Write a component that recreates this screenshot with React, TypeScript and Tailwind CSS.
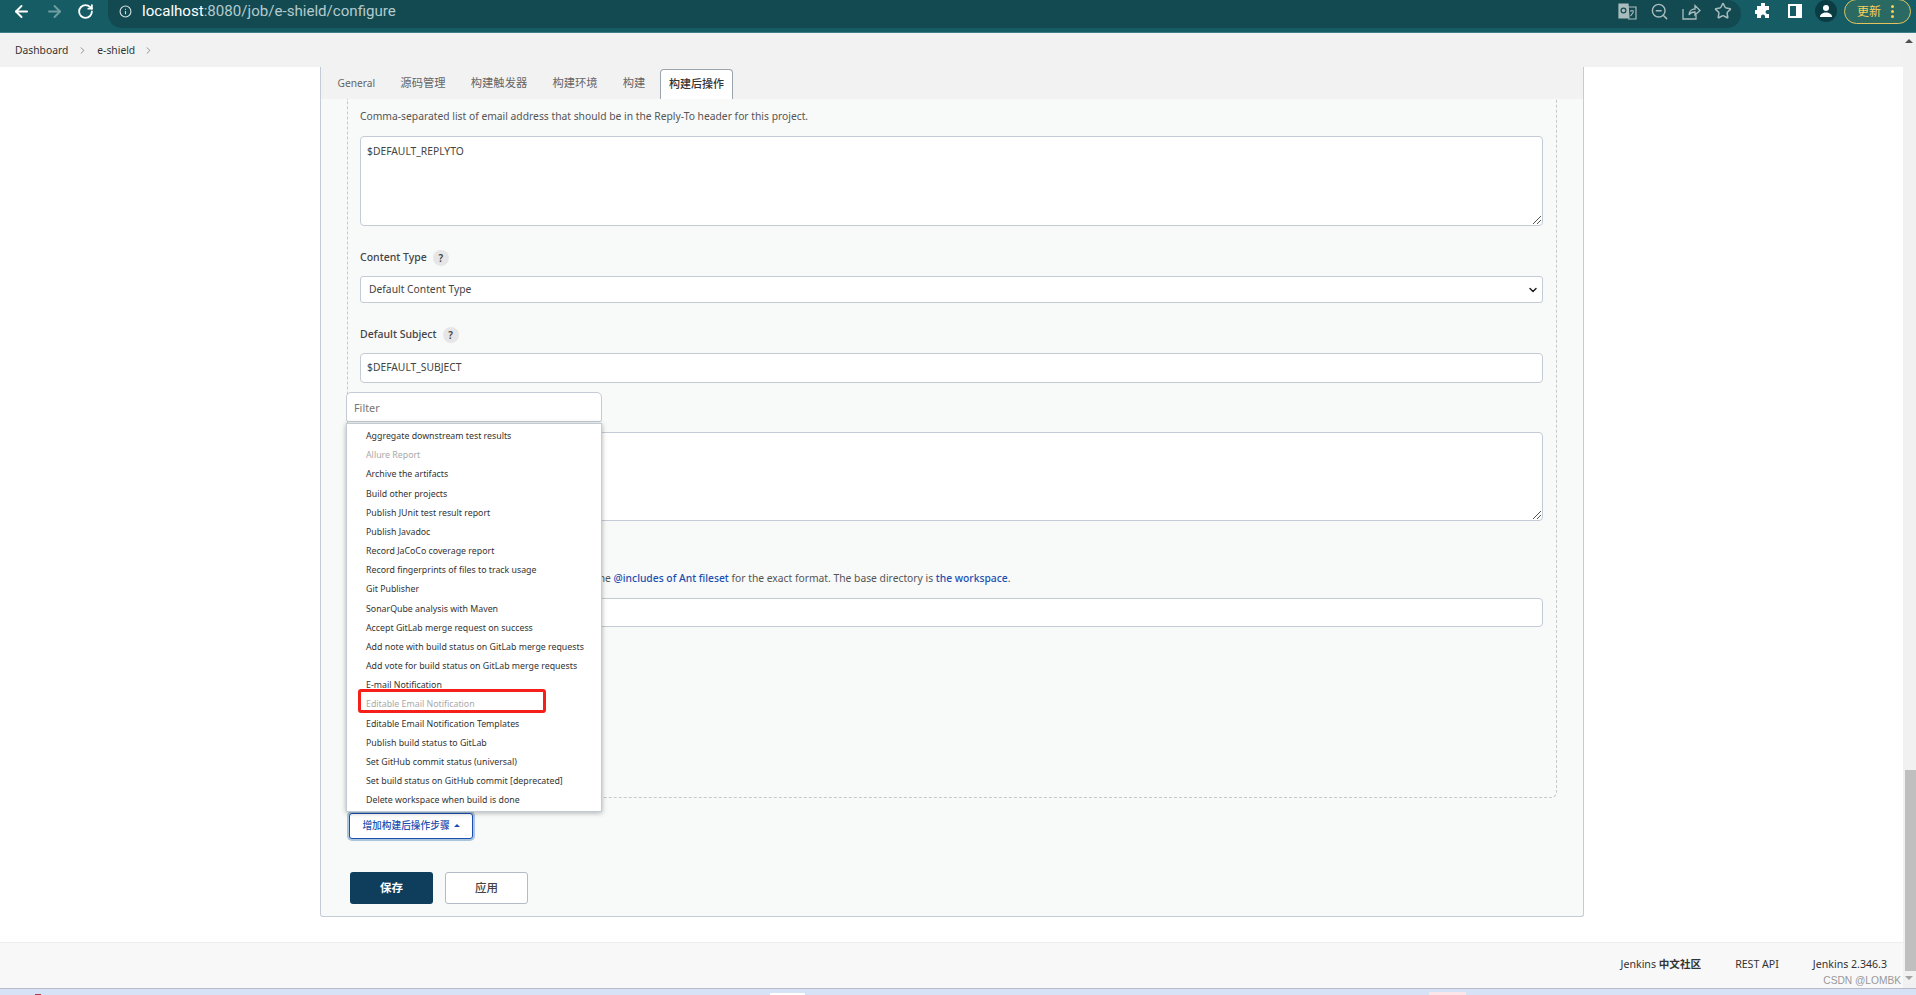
import { ArrowLeft, ArrowRight, RotateCw, Info, ZoomOut, Star, ChevronRight, ChevronDown } from 'lucide-react'

const font = "font-['Noto_Sans','Noto_Sans_CJK_SC',sans-serif]"

const menuItems = [
  { label: 'Aggregate downstream test results' },
  { label: 'Allure Report', disabled: true },
  { label: 'Archive the artifacts' },
  { label: 'Build other projects' },
  { label: 'Publish JUnit test result report' },
  { label: 'Publish Javadoc' },
  { label: 'Record JaCoCo coverage report' },
  { label: 'Record fingerprints of files to track usage' },
  { label: 'Git Publisher' },
  { label: 'SonarQube analysis with Maven' },
  { label: 'Accept GitLab merge request on success' },
  { label: 'Add note with build status on GitLab merge requests' },
  { label: 'Add vote for build status on GitLab merge requests' },
  { label: 'E-mail Notification' },
  { label: 'Editable Email Notification', disabled: true, marked: true },
  { label: 'Editable Email Notification Templates' },
  { label: 'Publish build status to GitLab' },
  { label: 'Set GitHub commit status (universal)' },
  { label: 'Set build status on GitHub commit [deprecated]' },
  { label: 'Delete workspace when build is done' },
]

const tabs = ['General', '源码管理', '构建触发器', '构建环境', '构建']

function HelpIcon() {
  return (
    <span className="ml-[6px] flex h-4 w-4 items-center justify-center rounded-full bg-[#e6e6e6] text-[10px] font-semibold text-[#444]">?</span>
  )
}

function ResizeHandle() {
  return (
    <svg width="9" height="9" viewBox="0 0 9 9" className="absolute bottom-[1px] right-[1px]" stroke="#555" strokeWidth="1">
      <path d="M1 9l8-8M5 9l4-4" />
    </svg>
  )
}

function BrowserBar() {
  return (
    <div className="flex h-[33px] shrink-0 items-start border-b border-[#3d7f86] bg-[#155c64] text-white">
      <div className="flex h-[28px] w-[108px] shrink-0 items-center pb-[6px] pl-[12px]">
        <ArrowLeft size={19} strokeWidth={2.4} className="shrink-0" />
        <ArrowRight size={19} strokeWidth={2.4} className="ml-[14px] shrink-0 text-[#6f9da2]" />
        <RotateCw size={17} strokeWidth={2.6} className="ml-[13px] shrink-0" />
      </div>
      <div className="flex h-[28px] w-[1633px] shrink-0 items-center rounded-r-[14px] rounded-bl-[14px] bg-[#134a52] pb-[6px] pl-[11px] pr-[9px] font-['Roboto',sans-serif] text-[15.100px]">
        <Info size={13} className="mr-[10px] text-[#d6e4e5]" />
        <span>localhost</span>
        <span className="text-[#b4cacd]">:8080/job/e-shield/configure</span>
        <div className="ml-auto flex items-center gap-[13px] text-[#a9bcbe]">
          <svg width="19" height="17" viewBox="0 0 19 17" fill="none" stroke="currentColor" strokeWidth="1.2">
            <path d="M1 1h9l1 14H1z" fill="#a9bcbe" />
            <path d="M8 4h10v12H10" />
            <circle cx="5.500" cy="7.500" r="2.400" stroke="#134a52" />
            <path d="M12 8h4M14 7v1M12.500 13l3-4" />
          </svg>
          <ZoomOut size={19} strokeWidth={1.8} />
          <svg width="19" height="17" viewBox="0 0 19 17" fill="none" stroke="currentColor" strokeWidth="1.3">
            <path d="M1 6v10h13v-4" />
            <path d="M7 12c0-4 3-6 6-6V2.500l5 5-5 4.500V9c-3 0-5 1-6 3z" />
          </svg>
          <Star size={18} strokeWidth={2} />
        </div>
      </div>
      <div className="flex h-[22px] items-center">
        <svg width="16" height="16" viewBox="0 0 16 16" fill="white" className="ml-[14px]">
          <path d="M6 1a2 2 0 0 1 4 0v2h4v4h-1.500a2 2 0 0 0 0 4H14v4h-4v-1.500a2 2 0 0 0-4 0V15H2v-4H1a2 2 0 0 1 0-4h1V3h4z" />
        </svg>
        <svg width="14" height="14" viewBox="0 0 14 14" className="ml-[17px]">
          <rect width="14" height="14" fill="white" />
          <rect x="2" y="2" width="6" height="10" fill="#155c64" />
        </svg>
        <div className="ml-[13px] flex h-[22px] w-[22px] items-center justify-center rounded-full bg-[#0c3c43]">
          <svg width="14" height="14" viewBox="0 0 14 14" fill="white">
            <circle cx="7" cy="4" r="3" />
            <path d="M1 13c0-3 3-4.500 6-4.500s6 1.500 6 4.500z" />
          </svg>
        </div>
        <div className="ml-[7px] flex h-[25px] w-[67px] shrink-0 items-center rounded-full border border-[#e3c35e] bg-[#2b6a62] pl-[12px] font-['Noto_Sans_CJK_SC',sans-serif] text-[12px] text-[#f6cf5f]">
          更新
          <span className="ml-[10px] flex flex-col gap-[2px]">
            <span className="h-[3px] w-[3px] rounded-full bg-[#f6cf5f]" />
            <span className="h-[3px] w-[3px] rounded-full bg-[#f6cf5f]" />
            <span className="h-[3px] w-[3px] rounded-full bg-[#f6cf5f]" />
          </span>
        </div>
      </div>
    </div>
  )
}

function AddStepMenu() {
  return (
    <div className="absolute left-[26px] top-[325px] z-10 w-[256px]">
      <div className="flex h-[30px] items-center rounded-t-[5px] rounded-b-[2px] border border-[#c3ccd4] bg-white pl-[7px] pt-[2px] text-[10.800px] text-[#757575]">Filter</div>
      <div className="mt-[1px] h-[389px] border border-[#c3ccd4] bg-white pt-[3px] shadow-[0_1px_5px_rgba(0,0,0,0.3)]">
        {menuItems.map((item) => (
          <div key={item.label} className={`relative flex h-[19.180px] items-center whitespace-nowrap pl-[19px] text-[8.800px] ${item.disabled ? 'text-[#a9a9a9]' : 'text-[#333]'}`}>
            {item.label}
            {item.marked && <span className="absolute left-[11px] top-[-6px] h-[24px] w-[188px] rounded-[3px] border-[3px] border-[#f5201a]" />}
          </div>
        ))}
      </div>
    </div>
  )
}

function ConfigForm() {
  return (
    <div className="relative ml-[26px] mr-[26px] h-[699px] rounded-b-[6px] border-x border-b border-dashed border-[#c6c9cc] pl-[12px] pr-[13px]">
      <p className="pt-[9px] text-[10.300px] leading-[16px] text-[#555]">Comma-separated list of email address that should be in the Reply-To header for this project.</p>
      <div className="relative mt-[12px] h-[90px] rounded-[4px] border border-[#c3ccd4] bg-white px-[6px] pt-[6px] text-[10.300px] leading-[16px] text-[#444]">
        $DEFAULT_REPLYTO
        <ResizeHandle />
      </div>
      <div className="mt-[24px] flex h-4 items-center text-[10.500px] font-medium text-[#444]">Content Type <HelpIcon /></div>
      <div className="mt-[10px] flex h-[27px] items-center justify-between rounded-[3px] border border-[#c3ccd4] bg-white pl-[8px] pr-[3px] text-[10.300px] text-[#444]">
        Default Content Type
        <ChevronDown size={12} strokeWidth={3} className="text-[#222]" />
      </div>
      <div className="mt-[24px] flex h-4 items-center text-[10.500px] font-medium text-[#444]">Default Subject <HelpIcon /></div>
      <div className="mt-[10px] flex h-[30px] items-center rounded-[4px] border border-[#c3ccd4] bg-white pl-[6px] text-[10.300px] text-[#444]">$DEFAULT_SUBJECT</div>
      <div className="relative mt-[49px] h-[89px] rounded-[4px] border border-[#c3ccd4] bg-white">
        <ResizeHandle />
      </div>
      <p className="mt-[49px] whitespace-nowrap pl-[235px] text-[10.300px] leading-[16px] text-[#555]">
        the <span className="font-medium text-[#1d4fb0]">@includes of Ant fileset</span> for the exact format. The base directory is <span className="font-medium text-[#1d4fb0]">the workspace</span>.
      </p>
      <div className="mt-[12px] h-[29px] rounded-[4px] border border-[#c3ccd4] bg-white" />
    </div>
  )
}

function Footer() {
  return (
    <div className="relative flex h-[46px] shrink-0 items-center justify-end border-t border-[#eeeeee] bg-[#f8f8f8] pb-[1px] pr-[16px] text-[10.600px] text-[#333]">
      <span>Jenkins <span className="font-bold">中文社区</span></span>
      <span className="ml-[34px]">REST API</span>
      <span className="ml-[34px]">Jenkins 2.346.3</span>
      <span className="absolute bottom-0 right-[2px] bg-[#f8f8f8] font-['Liberation_Sans',sans-serif] text-[10.200px] leading-[14px] text-[#999]">CSDN @LOMBK</span>
    </div>
  )
}

export default function App() {
  return (
    <div className={`flex h-screen w-full flex-col overflow-hidden bg-white ${font}`}>
      <BrowserBar />
      <div className="flex min-h-0 flex-1">
        <div className="flex min-w-0 flex-1 flex-col">
          <div className="flex h-[34px] shrink-0 items-center bg-[#f2f2f2] pl-[15px] pt-[1px] text-[10.300px] text-[#333]">
            Dashboard
            <ChevronRight size={11} className="mx-[9px] text-[#888]" />
            e-shield
            <ChevronRight size={11} className="ml-[8px] text-[#888]" />
          </div>
          <div className="min-h-0 flex-1 pl-[320px]">
            <div className="h-[850px] w-[1264px] rounded-b-[3px] border-x border-b border-[#c3ccd4] bg-[#f8f9f9]">
              <div className="flex h-[32px] items-end bg-[#f2f2f2] pl-[4px] text-[11.300px] text-[#666]">
                {tabs.map((tab) => (
                  <span key={tab} className={`flex h-[31px] items-center px-[12.600px] ${tab === 'General' ? 'text-[10.200px]' : ''}`}>{tab}</span>
                ))}
                <span className="ml-[2px] flex h-[30px] items-center rounded-t-[4px] border-x border-t border-[#9aa5ae] bg-white px-[8px] text-[11px] font-medium text-[#333]">构建后操作</span>
              </div>
              <ConfigForm />
              <div className="ml-[28px] mt-[15px] flex h-[26px] w-[124px] items-center justify-center gap-[4px] rounded-[3px] border border-[#1d4fb0] bg-white text-[9.700px] font-medium text-[#1d4fb0] shadow-[0_0_0_2px_#a9c6dc]">
                增加构建后操作步骤
                <span className="mb-[2px] h-0 w-0 border-x-[3px] border-b-[3px] border-x-transparent border-b-[#1d4fb0]" />
              </div>
              <div className="ml-[29px] mt-[33px] flex items-start gap-[12px] text-[11.500px]">
                <span className="flex h-[32px] w-[83px] items-center justify-center rounded-[3px] bg-[#0f3d5c] font-bold text-white">保存</span>
                <span className="flex h-[32px] w-[83px] items-center justify-center rounded-[3px] border border-[#b3bcc4] bg-white font-medium text-[#444]">应用</span>
              </div>
              <div className="absolute left-[320px] top-[67px] w-[1264px]">
                <AddStepMenu />
              </div>
            </div>
          </div>
          <Footer />
        </div>
        <div className="flex w-[13px] shrink-0 flex-col items-end bg-[#f1f1f1]">
          <span className="ml-auto mr-[3px] mt-[6px] h-0 w-0 border-x-[4px] border-b-[4px] border-x-transparent border-b-[#505050]" />
          <div className="mt-[727px] h-[201px] w-[11px] bg-[#bfbfbf]" />
          <span className="mr-[3px] mt-[5px] h-0 w-0 border-x-[4px] border-t-[4px] border-x-transparent border-t-[#a3a3a3]" />
        </div>
      </div>
      <div className="flex h-[7px] shrink-0 items-end border-t border-[#b5bbc9] bg-[#d8e2f6]">
        <span className="ml-[35px] h-[1px] w-[6px] bg-[#b03a48]" />
        <span className="ml-[729px] h-[2px] w-[35px] rounded-t-[1px] bg-white" />
        <span className="ml-[624px] h-[3px] w-[37px] rounded-t-[1px] bg-[#fde6ea]" />
      </div>
    </div>
  )
}
